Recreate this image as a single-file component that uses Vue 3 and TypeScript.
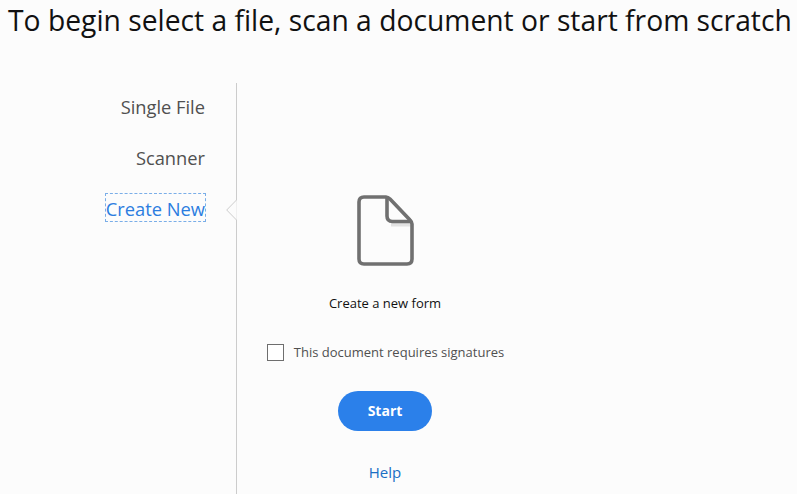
<script setup lang="ts">
const items = [
  { label: 'Single File', active: false },
  { label: 'Scanner', active: false },
  { label: 'Create New', active: true },
]
</script>

<template>
  <div class="page">
    <h1 class="title">To begin select a file, scan a document or start from scratch</h1>
    <div class="body">
      <nav class="nav">
        <a v-for="item in items" :key="item.label" class="nav-item" :class="{ active: item.active }">
          <span class="nav-label">{{ item.label }}</span>
        </a>
        <svg class="pointer" width="11" height="20" viewBox="0 0 11 20">
          <path d="M10.5 0 L0.7 10 L10.5 20" fill="#fcfcfc" stroke="#cccccc" stroke-width="1" />
          <rect x="10.5" y="0.5" width="1" height="19" fill="#fcfcfc" />
        </svg>
      </nav>
      <main class="panel">
        <svg class="doc" width="60" height="76" viewBox="0 0 60 76">
          <rect x="35" y="30" width="20" height="3.5" fill="#e2e2e2" />
          <path d="M8 4 H30 Q32 4 34 6 L54 27 Q56 29 56 31 V66 Q56 71 51 71 H8 Q3 71 3 66 V9 Q3 4 8 4 Z" fill="none" stroke="#707070" stroke-width="3.6" stroke-linejoin="round" />
          <path d="M31 4.5 V23 Q31 28.5 36.5 28.5 H55" fill="none" stroke="#707070" stroke-width="3.6" />
        </svg>
        <div class="caption">Create a new form</div>
        <label class="check">
          <span class="box"></span>
          <span class="check-text">This document requires signatures</span>
        </label>
        <button class="start" type="button">Start</button>
        <a class="help">Help</a>
      </main>
    </div>
  </div>
</template>

<style>
html, body { margin: 0; background: #fcfcfc; }
</style>

<style scoped>
.page {
  width: 797px;
  height: 494px;
  overflow: hidden;
  background: #fcfcfc;
  font-family: "Open Sans", "Noto Sans", sans-serif;
  display: flex;
  flex-direction: column;
}
.title {
  margin: 0;
  padding: 0 0 0 8px;
  height: 83px;
  box-sizing: border-box;
  font-size: 28.25px;
  font-weight: 400;
  line-height: 40px;
  color: #111;
  white-space: nowrap;
}
.body { flex: 1; display: flex; }
.nav {
  position: relative;
  width: 237px;
  box-sizing: border-box;
  border-right: 1px solid #cccccc;
  padding: 10px 30px 0 0;
  display: flex;
  flex-direction: column;
  align-items: flex-end;
  gap: 23px;
}
.nav-item {
  font-size: 18.3px;
  line-height: 26px;
  color: #505050;
  border: 1px solid transparent;
}
.nav-item.active {
  color: #2b7de0;
  border: 1px dashed #7aaee8;
  line-height: 24px;
  padding-top: 3px;
  margin-top: -2px;
}
.pointer { position: absolute; left: 226px; top: 117px; }
.panel {
  width: 296px;
  display: flex;
  flex-direction: column;
  align-items: center;
  padding-top: 110px;
}
.doc { display: block; margin: 0 0 25px 2px; }
.caption { font-size: 13px; line-height: 18px; color: #111; }
.check {
  display: flex;
  align-items: center;
  gap: 10px;
  margin-top: 31px;
  margin-left: 1px;
  font-size: 13px;
  line-height: 18px;
  color: #505050;
}
.box {
  width: 15px;
  height: 15px;
  border: 1px solid #6e6e6e;
  background: #fff;
}
.start {
  margin-top: 30px;
  width: 94px;
  height: 40px;
  border: none;
  border-radius: 20px;
  background: #2b80ea;
  color: #fff;
  font-family: inherit;
  font-size: 14px;
  font-weight: 700;
  padding: 0 0 2px;
}
.help { margin-top: 31px; font-size: 15px; line-height: 20px; color: #1a6fc4; }
</style>
